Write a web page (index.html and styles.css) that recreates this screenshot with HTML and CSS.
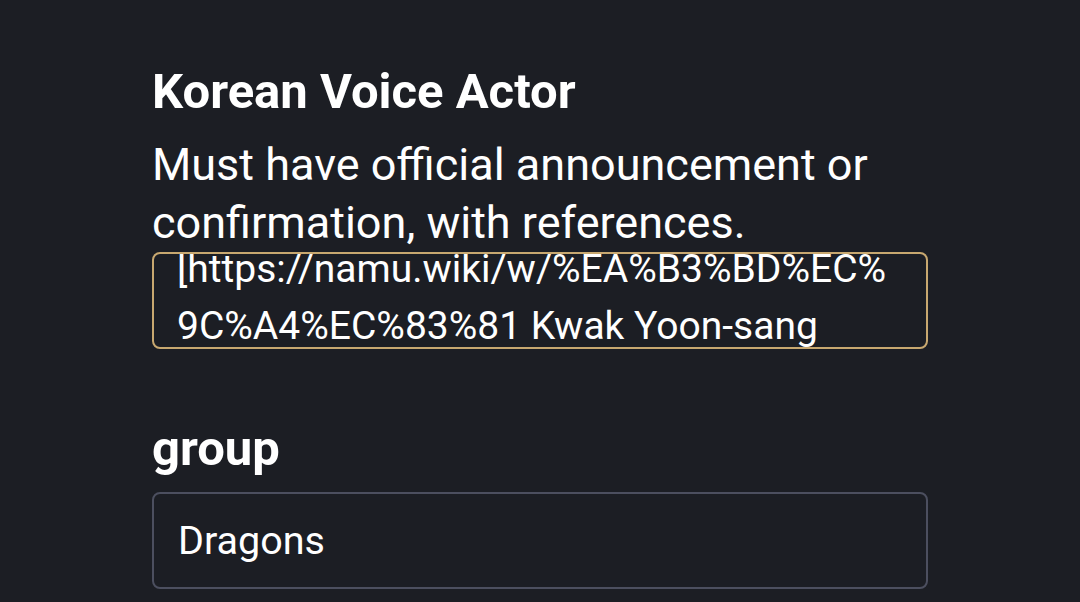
FILE: index.html
```html
<!DOCTYPE html>
<html lang="en">
<head>
<meta charset="utf-8">
<title>Character form</title>
<link rel="stylesheet" href="styles.css">
</head>
<body>
<main class="form">
  <section class="field">
    <h2 class="field-label">Korean Voice Actor</h2>
    <p class="field-help">Must have official announcement or confirmation, with references.</p>
    <div class="textbox textbox-focused">
      <div class="textbox-scroll">[https://namu.wiki/w/%EA%B3%BD%EC%9C%A4%EC%83%81 Kwak Yoon-sang</div>
    </div>
  </section>
  <section class="field field-group">
    <h2 class="field-label">group</h2>
    <div class="input">Dragons</div>
  </section>
</main>
</body>
</html>
```
FILE: styles.css
```css
html, body {
  margin: 0;
  padding: 0;
  background: #1c1e24;
  color: #ffffff;
  font-family: Roboto, "Noto Sans", "Liberation Sans", sans-serif;
}
body {
  height: 602px;
  overflow: hidden;
}
.form {
  width: 776px;
  margin: 0 auto;
  padding-top: 62px;
}
.field {
  display: flex;
  flex-direction: column;
}
.field-label {
  margin: 0;
  font-size: 49px;
  font-weight: 700;
  line-height: 60px;
}
.field-help {
  margin: 13.5px 0 0;
  font-size: 45px;
  line-height: 58px;
}
.textbox {
  box-sizing: border-box;
  height: 97px;
  border: 2px solid #c8a870;
  border-radius: 8px;
  overflow: hidden;
  padding: 0 24px 0 23px;
  font-size: 39px;
  line-height: 57px;
}
.textbox-scroll {
  margin-top: -13px;
  word-break: break-all;
}
.field-group {
  margin-top: 70px;
}
.field-group .field-label {
  margin-bottom: 13px;
}
.input {
  box-sizing: border-box;
  height: 97px;
  border: 2px solid #4c4f5f;
  border-radius: 8px;
  padding: 0 24px;
  display: flex;
  align-items: center;
  font-size: 39.5px;
}
```
